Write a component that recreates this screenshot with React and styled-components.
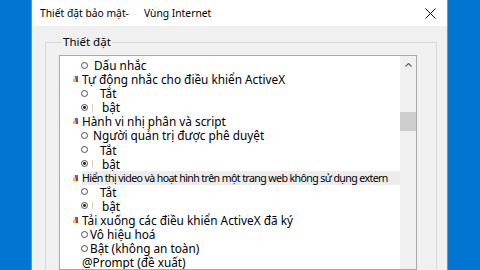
import React from 'react';
import styled, { createGlobalStyle } from 'styled-components';

// security settings dialog, internet zone
const GlobalStyle = createGlobalStyle`
  html, body {
    margin: 0;
    padding: 0;
    background: #0274d2;
    overflow: hidden;
  }
  body {
    font-family: "Noto Sans", "Open Sans", sans-serif;
    font-size: 11.8px;
    color: #000;
  }
`;

const Dialog = styled.div`
  margin-left: 31px;
  width: 417px;
  height: 270px;
  box-sizing: border-box;
  border-left: 1px solid #8c8c8c;
  border-right: 1px solid #8c8c8c;
  display: flex;
  flex-direction: column;
  background: #f0f0f0;
  overflow: hidden;
`;

const TitleBar = styled.div`
  height: 26px;
  flex: none;
  background: #fff;
  display: flex;
  align-items: center;
  padding: 0 11px 0 8px;
  font-size: 10.3px;
`;

const TitleText = styled.span`
  margin-right: ${(p) => p.gap || 0}px;
  white-space: pre;
`;

const CloseButton = styled.div`
  margin-left: auto;
  width: 11px;
  height: 11px;
  display: flex;
`;

const Body = styled.div`
  flex: 1;
  padding: 16px 10px 0 13px;
  min-height: 0;
`;

const GroupBox = styled.div`
  border: 1px solid #d8d8d8;
  border-bottom: none;
  padding: 0 19px 0 13px;
  height: 100%;
  box-sizing: border-box;
`;

const Legend = styled.div`
  width: fit-content;
  margin: -8px 0 0 3px;
  padding: 0 1px;
  line-height: 14px;
  height: 14px;
  background: #f0f0f0;
  font-size: 11.5px;
`;

const ListBox = styled.div`
  margin-top: 6px;
  height: 215px;
  box-sizing: border-box;
  border: 1px solid #a9a9a9;
  background: #fff;
  display: flex;
`;

const ListContent = styled.div`
  flex: 1;
  min-width: 0;
  overflow: hidden;
  padding-top: 2px;
`;

const ScrollBar = styled.div`
  width: 16px;
  flex: none;
  background: #f0f0f0;
  display: flex;
  flex-direction: column;
  align-items: center;
`;

const ScrollArrow = styled.div`
  height: 17px;
  display: flex;
  align-items: center;
  justify-content: center;
`;

const ScrollThumb = styled.div`
  margin-top: 39px;
  width: 100%;
  height: 19px;
  background: #cdcdcd;
`;

const Row = styled.div`
  height: 14.1px;
  line-height: 14.1px;
  display: flex;
  align-items: center;
  padding-left: ${(p) => p.indent}px;
  white-space: nowrap;
`;

const Label = styled.span`
  margin-left: ${(p) => p.pad || 0}px;
  background: ${(p) => (p.active ? '#ececec' : 'transparent')};
  padding-right: ${(p) => (p.active ? 20 : 0)}px;
  font-size: ${(p) => (p.active ? '10.6px' : 'inherit')};
  letter-spacing: ${(p) => (p.active ? '-0.6px' : 'normal')};
`;

const Tick = styled.span`
  width: 1px;
  height: 7px;
  margin-left: 4px;
  background: #e6c9a6;
`;

const Radio = ({ checked }) => (
  <svg width="7" height="7" viewBox="0 0 7 7" style={{ flex: 'none' }}>
    <circle cx="3.5" cy="3.5" r="3" fill="#fff" stroke="#3a3a3a" strokeWidth="0.9" />
    {checked && <circle cx="3.5" cy="3.5" r="1.4" fill="#111" />}
  </svg>
);

const CatIcon = () => (
  <svg width="5" height="6" viewBox="0 0 5 6" style={{ flex: 'none' }}>
    <rect x="0" y="0" width="5" height="6" fill="#e9e4f4" />
    <rect x="2" y="0" width="3" height="3" fill="#6a5fc8" />
    <rect x="0" y="3" width="3" height="3" fill="#f0c020" />
    <rect x="3" y="3" width="2" height="3" fill="#c03020" />
  </svg>
);

const rows = [
  { kind: 'radio', text: 'Dấu nhắc', pad: 6 },
  { kind: 'cat', text: 'Tự động nhắc cho điều khiển ActiveX' },
  { kind: 'radio', text: 'Tắt', pad: 12 },
  { kind: 'radio', text: 'bật', checked: true },
  { kind: 'cat', text: 'Hành vi nhị phân và script' },
  { kind: 'radio', text: 'Người quản trị được phê duyệt', pad: 5 },
  { kind: 'radio', text: 'Tắt', pad: 12 },
  { kind: 'radio', text: 'bật', checked: true },
  { kind: 'cat', text: 'Hiển thị video và hoạt hình trên một trang web không sử dụng extern', active: true },
  { kind: 'radio', text: 'Tắt', pad: 12 },
  { kind: 'radio', text: 'bật', checked: true },
  { kind: 'cat', text: 'Tải xuống các điều khiển ActiveX đã ký' },
  { kind: 'radio', text: 'Vô hiệu hoá', pad: 2 },
  { kind: 'radio', text: 'Bật (không an toàn)', pad: 2 },
  { kind: 'plain', text: '@Prompt (đề xuất)' },
];

export default function App() {
  return (
    <>
      <GlobalStyle />
      <Dialog>
        <TitleBar>
          <TitleText gap={15}>Thiết đặt bảo mật-</TitleText>
          <TitleText>Vùng Internet</TitleText>
          <CloseButton>
            <svg width="11" height="11" viewBox="0 0 11 11">
              <path d="M0.5 0.5 L10.5 10.5 M10.5 0.5 L0.5 10.5" stroke="#111" strokeWidth="1" />
            </svg>
          </CloseButton>
        </TitleBar>
        <Body>
          <GroupBox>
            <Legend>Thiết đặt</Legend>
            <ListBox>
              <ListContent>
                {rows.map((r, i) => {
                  if (r.kind === 'cat') {
                    return (
                      <Row key={i} indent={13}>
                        <CatIcon />
                        <Label pad={4} active={r.active}>{r.text}</Label>
                      </Row>
                    );
                  }
                  if (r.kind === 'plain') {
                    return (
                      <Row key={i} indent={22}>
                        <Label>{r.text}</Label>
                      </Row>
                    );
                  }
                  return (
                    <Row key={i} indent={21}>
                      <Radio checked={r.checked} />
                      {r.checked && <Tick />}
                      <Label pad={r.checked ? 9 : r.pad}>{r.text}</Label>
                    </Row>
                  );
                })}
              </ListContent>
              <ScrollBar>
                <ScrollArrow>
                  <svg width="7" height="4" viewBox="0 0 7 4">
                    <path d="M0.5 3.5 L3.5 0.5 L6.5 3.5" fill="none" stroke="#606060" strokeWidth="1.1" />
                  </svg>
                </ScrollArrow>
                <ScrollThumb />
              </ScrollBar>
            </ListBox>
          </GroupBox>
        </Body>
      </Dialog>
    </>
  );
}
